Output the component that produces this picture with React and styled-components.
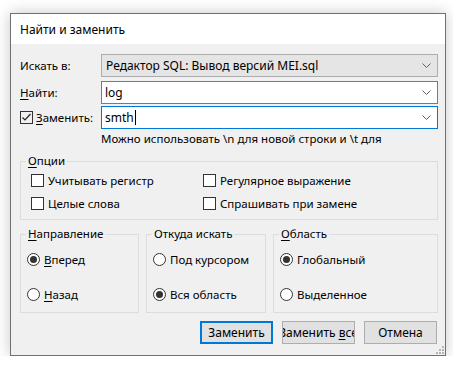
import React from 'react'
import styled, { createGlobalStyle } from 'styled-components'

const GlobalStyle = createGlobalStyle`
  html, body {
    margin: 0;
    background: #fff;
  }
  body {
    font-family: 'Noto Sans', 'Segoe UI', sans-serif;
    font-size: 11.5px;
    color: #000;
  }
`

const Page = styled.div`
  padding: 13px 0 0 10px;
`

const Window = styled.div`
  position: relative;
  width: 434px;
  height: 341px;
  border: 1px solid #707070;
  background: #f0f0f0;
  box-shadow: 0 0 14px rgba(0, 0, 0, 0.22);
  display: flex;
  flex-direction: column;
`

const TitleBar = styled.div`
  height: 30px;
  background: #fff;
  display: flex;
  align-items: center;
  padding-left: 9px;
  font-size: 12px;
`

const Body = styled.div`
  flex: 1;
  padding: 10px 7px 0 9px;
  display: flex;
  flex-direction: column;
`

const Row = styled.div`
  display: grid;
  grid-template-columns: 81px 1fr;
  align-items: center;
  margin-top: ${p => p.$gap || 0}px;
`

const Label = styled.label`
  display: flex;
  align-items: center;
  gap: 3px;
  white-space: nowrap;
`

const Key = styled.u`
  text-decoration: underline;
  text-underline-offset: 2px;
`

const Field = styled.div`
  box-sizing: border-box;
  height: 23px;
  display: flex;
  align-items: center;
  padding: 0 6px 0 ${p => (p.$combo ? 4 : 3)}px;
  background: ${p => (p.$combo ? '#e5e5e5' : '#fff')};
  border: 1px solid ${p => (p.$focus ? '#0078d7' : p.$combo ? '#adadad' : '#7a7a7a')};
`

const FieldText = styled.span`
  flex: 1;
  display: flex;
  align-items: center;
  white-space: nowrap;
  overflow: hidden;
  font-size: 12px;
`

const Caret = styled.span`
  width: 1px;
  height: 15px;
  background: #000;
  margin-left: 1px;
`

const Hint = styled.div`
  margin: 2px 0 0 81px;
  line-height: 16px;
  white-space: nowrap;
`

const Group = styled.fieldset`
  margin: ${p => p.$top || 0}px 0 0;
  padding: 0 0 5px;
  border: 1px solid #dcdcdc;
  min-width: 0;
`

const Legend = styled.legend`
  margin-left: 5px;
  padding: 0 2px;
  line-height: 16px;
`

const OptionsGrid = styled.div`
  display: grid;
  grid-template-columns: 172px 1fr;
  grid-auto-rows: 22px;
  row-gap: 1px;
  align-items: center;
  padding-left: 10px;
`

const GroupsRow = styled.div`
  display: grid;
  grid-template-columns: 119px 120px 1fr;
  column-gap: 7px;
  margin-top: 6px;
`

const RadioGroup = styled.fieldset`
  margin: 0;
  padding: 0;
  border: 1px solid #dcdcdc;
  min-width: 0;
  display: grid;
  grid-template-rows: 35px 35px;
  align-items: center;
`

const Choice = styled.label`
  display: flex;
  align-items: center;
  gap: ${p => p.$gap || 4}px;
  padding-left: ${p => p.$indent || 0}px;
  white-space: nowrap;
`

const Box = styled.span`
  box-sizing: border-box;
  width: 13px;
  height: 13px;
  border: 1px solid #333;
  background: ${p => (p.$plain ? 'transparent' : '#fff')};
  display: flex;
  align-items: center;
  justify-content: center;
  flex-shrink: 0;
`

const Radio = styled.span`
  box-sizing: border-box;
  width: 13px;
  height: 13px;
  border-radius: 50%;
  border: 1px solid #333;
  background: #fff;
  display: flex;
  align-items: center;
  justify-content: center;
  flex-shrink: 0;

  &::after {
    content: '';
    width: 7px;
    height: 7px;
    border-radius: 50%;
    background: ${p => (p.$on ? '#333' : 'transparent')};
  }
`

const Buttons = styled.div`
  display: flex;
  justify-content: flex-end;
  gap: 9px;
  margin: 8px 1px 0 0;
`

const Button = styled.button`
  box-sizing: border-box;
  width: 73px;
  height: 23px;
  padding: 0;
  font: inherit;
  font-size: 12px;
  color: #000;
  background: #e1e1e1;
  border: ${p => (p.$default ? '2px solid #0078d7' : '1px solid #adadad')};
  display: flex;
  align-items: center;
  justify-content: center;
  overflow: hidden;
  white-space: nowrap;
`

const Grip = styled.svg`
  position: absolute;
  right: 1px;
  bottom: 1px;
`

const Chevron = () => (
  <svg width="9" height="5" viewBox="0 0 9 5">
    <path d="M0.5 0.5 L4.5 4.5 L8.5 0.5" fill="none" stroke="#606060" strokeWidth="1" />
  </svg>
)

const Check = () => (
  <svg width="11" height="11" viewBox="0 0 11 11">
    <path d="M1.5 5.5 L4 8 L9.5 2" fill="none" stroke="#222" strokeWidth="1.2" />
  </svg>
)

const CheckItem = ({ children }) => (
  <Choice $gap={4}>
    <Box />
    <span>{children}</span>
  </Choice>
)

const RadioItem = ({ on, children }) => (
  <Choice $indent={6}>
    <Radio $on={on} />
    <span>{children}</span>
  </Choice>
)

export default function App() {
  return (
    <>
      <GlobalStyle />
      <Page>
        <Window>
          <TitleBar>Найти и заменить</TitleBar>
          <Body>
            <Row>
              <Label>Искать в:</Label>
              <Field $combo>
                <FieldText>Редактор SQL: Вывод версий MEI.sql</FieldText>
                <Chevron />
              </Field>
            </Row>
            <Row $gap={4}>
              <Label><span><Key>Н</Key>айти:</span></Label>
              <Field>
                <FieldText>log</FieldText>
                <Chevron />
              </Field>
            </Row>
            <Row $gap={2}>
              <Label>
                <Box $plain><Check /></Box>
                <span><Key>З</Key>аменить:</span>
              </Label>
              <Field $focus>
                <FieldText>smth<Caret /></FieldText>
                <Chevron />
              </Field>
            </Row>
            <Hint>Можно использовать \n для новой строки и \t для</Hint>

            <Group $top={6}>
              <Legend><Key>О</Key>пции</Legend>
              <OptionsGrid>
                <CheckItem>Учитывать регистр</CheckItem>
                <CheckItem>Регулярное выражение</CheckItem>
                <CheckItem>Целые слова</CheckItem>
                <CheckItem>Спрашивать при замене</CheckItem>
              </OptionsGrid>
            </Group>

            <GroupsRow>
              <RadioGroup>
                <Legend><Key>Н</Key>аправление</Legend>
                <RadioItem on><Key>В</Key>перед</RadioItem>
                <RadioItem><Key>Н</Key>азад</RadioItem>
              </RadioGroup>
              <RadioGroup>
                <Legend>Откуда искать</Legend>
                <RadioItem>Под курсором</RadioItem>
                <RadioItem on>Вся область</RadioItem>
              </RadioGroup>
              <RadioGroup>
                <Legend><Key>О</Key>бласть</Legend>
                <RadioItem on>Глобальный</RadioItem>
                <RadioItem>Выделенное</RadioItem>
              </RadioGroup>
            </GroupsRow>

            <Buttons>
              <Button $default>Заменить</Button>
              <Button><span>Заменить <Key>в</Key>се</span></Button>
              <Button>Отмена</Button>
            </Buttons>
          </Body>
          <Grip width="9" height="9" viewBox="0 0 9 9">
            <rect x="7" y="1" width="2" height="2" fill="#b5b5b5" />
            <rect x="4" y="4" width="2" height="2" fill="#b5b5b5" />
            <rect x="7" y="4" width="2" height="2" fill="#b5b5b5" />
            <rect x="1" y="7" width="2" height="2" fill="#b5b5b5" />
            <rect x="4" y="7" width="2" height="2" fill="#b5b5b5" />
            <rect x="7" y="7" width="2" height="2" fill="#b5b5b5" />
          </Grip>
        </Window>
      </Page>
    </>
  )
}
